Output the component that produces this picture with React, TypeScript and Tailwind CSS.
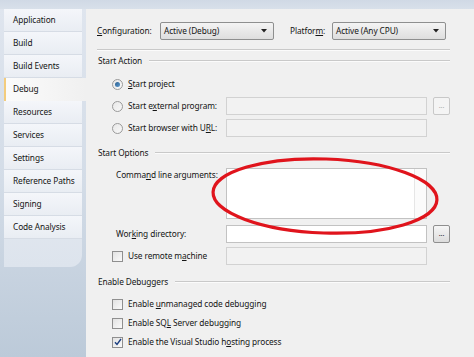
import React from "react";

const F = { fontFamily: '"Noto Sans", "Open Sans", sans-serif' };

function U({ children }: { children: React.ReactNode }) {
  return <span className="underline decoration-[0.5px] underline-offset-[1px]">{children}</span>;
}

function Dropdown({ text }: { text: string }) {
  return (
    <div className="w-[114px] h-[18px] flex items-center justify-between rounded-[2px] border border-[#8e8f8f] bg-gradient-to-b from-[#f4f4f4] to-[#dedede] pl-[3px] pr-[6px]">
      <span>{text}</span>
      <svg width="6" height="4" viewBox="0 0 6 4">
        <path d="M0 0 L6 0 L3 3.5 Z" fill="#222" />
      </svg>
    </div>
  );
}

function Header({ text }: { text: string }) {
  return (
    <div className="flex items-center h-[12px] pl-[1px]">
      <span className="whitespace-nowrap">{text}</span>
      <div className="flex-1 ml-[7px] flex flex-col">
        <div className="h-px bg-[#c9c9c9]" />
        <div className="h-px bg-[#fbfbfb]" />
      </div>
    </div>
  );
}

function Radio({ on }: { on?: boolean }) {
  return (
    <div className="w-[11px] h-[11px] rounded-full border border-[#9a9a9a] bg-gradient-to-br from-[#e8e8e8] to-[#f8f8f8] flex items-center justify-center">
      {on && <div className="w-[5px] h-[5px] rounded-full bg-gradient-to-br from-[#2e5f8f] to-[#5a9ad0]" />}
    </div>
  );
}

function Check({ on }: { on?: boolean }) {
  return (
    <div className="w-[11px] h-[11px] border border-[#8f8f8f] bg-gradient-to-br from-[#e2e2e2] to-[#fafafa] flex items-center justify-center">
      {on && (
        <svg width="8" height="8" viewBox="0 0 8 8">
          <path d="M1 4.2 L3 6.5 L7 1" stroke="#1c3f80" strokeWidth="1.4" fill="none" />
        </svg>
      )}
    </div>
  );
}

function Box({ white, tall }: { white?: boolean; tall?: boolean }) {
  return (
    <div
      className={`w-[201px] ${tall ? "h-[51px]" : "h-[18px]"} border ${
        white ? "bg-white border-[#c2c2c2]" : "bg-[#f2f2f2] border-[#d2d2d2]"
      } flex justify-end`}
    >
      {tall && <div className="w-[12px] h-full border-l border-[#e6e6e6] bg-[#fbfbfb]" />}
    </div>
  );
}

function Btn({ enabled }: { enabled?: boolean }) {
  return (
    <div
      className={`ml-[6px] w-[17px] h-[18px] rounded-[2px] border ${
        enabled ? "border-[#8f8f8f] bg-gradient-to-b from-[#f6f6f6] to-[#dcdcdc] text-[#222]" : "border-[#c8c8c8] bg-[#f4f4f4] text-[#aaa]"
      } flex items-center justify-center text-[7px] leading-none pb-[2px]`}
    >
      ...
    </div>
  );
}

const tabs = [
  "Application",
  "Build",
  "Build Events",
  "Debug",
  "Resources",
  "Services",
  "Settings",
  "Reference Paths",
  "Signing",
  "Code Analysis",
];

export default function App() {
  return (
    <div
      className="relative w-[474px] h-[357px] overflow-hidden flex flex-col bg-[#d3dce8] text-[8.3px] leading-none tracking-[-0.1px] text-[#151515]"
      style={F}
    >
      <div className="h-[9px] bg-gradient-to-b from-[#d0d9e5] to-[#d8e0ea]" />
      <div className="flex flex-1">
        {/* sidebar */}
        <div className="w-[86px] bg-gradient-to-b from-[#dfe5ee] via-[#d3dce7] to-[#bccad9]">
          <div className="ml-[4px] w-[78px] h-[258px] rounded-br-[12px] bg-gradient-to-b from-[#f0f2f7] to-[#dde4ed]">
            {tabs.map((t) =>
              t === "Debug" ? (
                <div
                  key={t}
                  className="relative w-[82px] h-[23px] flex items-center pl-[7px] bg-gradient-to-r from-[#fbfbfb] to-[#f0f0f0] border-l-[2px] border-[#f3cc7d]"
                >
                  {t}
                </div>
              ) : (
                <div
                  key={t}
                  className="h-[23px] flex items-center pl-[9px] bg-gradient-to-b from-[#f4f6fa] to-[#e9edf3] border-b border-[#d6dce5]"
                >
                  {t}
                </div>
              )
            )}
          </div>
        </div>

        {/* main panel */}
        <div className="flex-1 bg-[#f0f0f0] pl-[11px] pr-[24px] flex flex-col">
          <div className="mt-[13px] h-[18px] flex items-center">
            <span className="w-[63px]">
              <U>C</U>onfiguration:
            </span>
            <Dropdown text="Active (Debug)" />
            <span className="ml-[16px] w-[42px]">
              Platfor<U>m</U>:
            </span>
            <Dropdown text="Active (Any CPU)" />
          </div>
          <div className="mt-[9px] flex flex-col">
            <div className="h-px bg-[#c9c9c9]" />
            <div className="h-px bg-[#fbfbfb]" />
          </div>

          <div className="mt-[4px]">
            <Header text="Start Action" />
          </div>

          <div className="mt-[8px] flex flex-col gap-[4px] pl-[15px]">
            <div className="h-[18px] flex items-center">
              <Radio on />
              <span className="ml-[5px]">
                <U>S</U>tart project
              </span>
            </div>
            <div className="h-[18px] flex items-center">
              <div className="w-[114px] flex items-center">
                <Radio />
                <span className="ml-[5px]">
                  Start e<U>x</U>ternal program:
                </span>
              </div>
              <Box />
              <Btn />
            </div>
            <div className="h-[18px] flex items-center">
              <div className="w-[114px] flex items-center">
                <Radio />
                <span className="ml-[5px]">
                  Start browser with U<U>R</U>L:
                </span>
              </div>
              <Box />
            </div>
          </div>

          <div className="mt-[10px]">
            <Header text="Start Options" />
          </div>

          <div className="mt-[9px] flex items-start">
            <span className="w-[129px] pl-[19px] pt-[3px]">
              Comma<U>n</U>d line arguments:
            </span>
            <Box white tall />
          </div>

          <div className="mt-[6px] h-[18px] flex items-center">
            <span className="w-[129px] pl-[19px]">
              Wor<U>k</U>ing directory:
            </span>
            <Box white />
            <Btn enabled />
          </div>

          <div className="mt-[4px] h-[18px] flex items-center pl-[15px]">
            <div className="w-[114px] flex items-center">
              <Check />
              <span className="ml-[5px]">
                Use remote m<U>a</U>chine
              </span>
            </div>
            <Box />
          </div>

          <div className="mt-[11px]">
            <Header text="Enable Debuggers" />
          </div>

          <div className="mt-[7px] flex flex-col gap-[1px] pl-[15px]">
            <div className="h-[18px] flex items-center">
              <Check />
              <span className="ml-[5px]">
                Enable <U>u</U>nmanaged code debugging
              </span>
            </div>
            <div className="h-[18px] flex items-center">
              <Check />
              <span className="ml-[5px]">
                Enable SQ<U>L</U> Server debugging
              </span>
            </div>
            <div className="h-[18px] flex items-center">
              <Check on />
              <span className="ml-[5px]">
                Enable the Visual Studio h<U>o</U>sting process
              </span>
            </div>
          </div>
        </div>
      </div>

      {/* red annotation ellipse */}
      <svg className="absolute left-[207px] top-[153px]" width="236" height="86" viewBox="0 0 236 86">
        <ellipse
          cx="118"
          cy="43"
          rx="112"
          ry="37"
          transform="rotate(2 118 43)"
          fill="none"
          stroke="#e0141c"
          strokeWidth="3.2"
        />
      </svg>
    </div>
  );
}
